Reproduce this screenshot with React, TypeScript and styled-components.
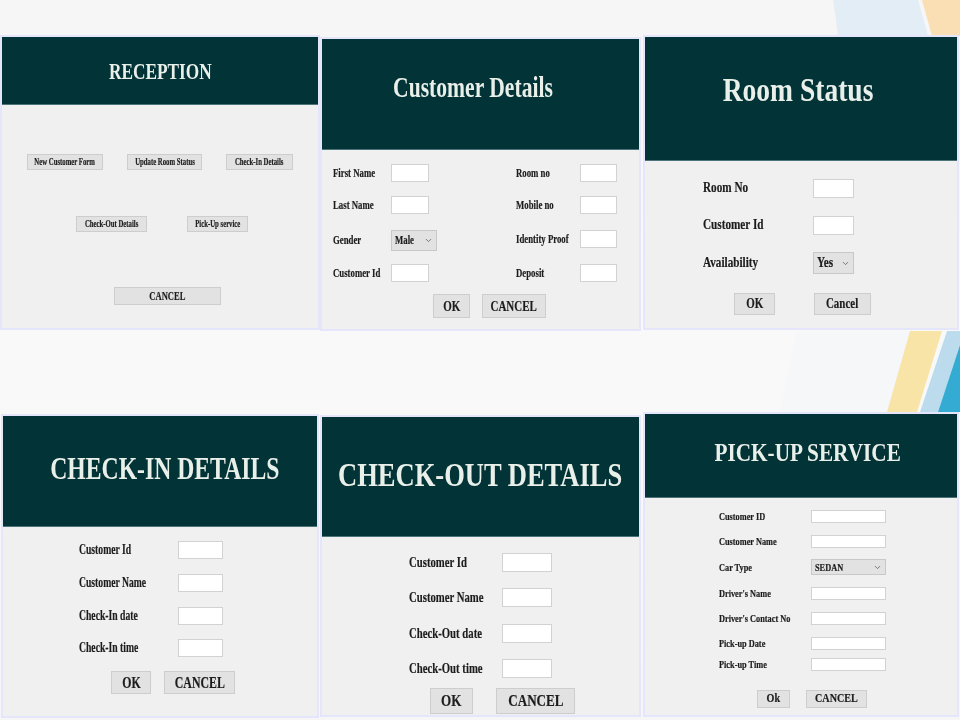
import styled, { createGlobalStyle } from "styled-components";
import { ChevronDown } from "lucide-react";

interface FieldData {
  label: string;
  center: number;
  select?: string;
}

interface FormData {
  width?: number;
  left: number;
  labelWidth: number;
  inputWidth: number;
  selectWidth?: number;
  height: number;
  font: number;
  squeeze: number;
  fields: FieldData[];
}

interface ButtonData {
  text: string;
  width: number;
}

const GlobalStyle = createGlobalStyle`
  html, body {
    margin: 0;
    padding: 0;
    background: #f7f7f7;
  }
`;

const Canvas = styled.div`
  position: relative;
  width: 960px;
  height: 720px;
  overflow: hidden;
  background: linear-gradient(180deg, #f6f6f6 0%, #f9f9f9 50%, #f6f6f6 100%);
  font-family: "Liberation Serif", "Times New Roman", serif;
  filter: blur(0.45px);
`;

const Backdrop = styled.svg`
  position: absolute;
  inset: 0;
`;

const Row = styled.div`
  position: relative;
  display: flex;
  align-items: flex-start;
  height: ${(p: { $h: number }) => p.$h}px;
`;

const Panel = styled.section<{ $w: number; $h: number; $ml: number; $mt: number }>`
  box-sizing: border-box;
  flex: none;
  width: ${(p) => p.$w}px;
  height: ${(p) => p.$h}px;
  margin: ${(p) => p.$mt}px 0 0 ${(p) => p.$ml}px;
  border: 2px solid #e5e5fb;
  background: #f0f0f0;
`;

const Header = styled.header<{ $h: number; $pad: string }>`
  box-sizing: border-box;
  display: flex;
  align-items: center;
  justify-content: center;
  height: ${(p) => p.$h}px;
  padding: ${(p) => p.$pad};
  background: #023337;
  border-bottom: 1px solid #4c7478;
`;

const Title = styled.h1<{ $size: number; $squeeze: number }>`
  margin: 0;
  color: #e9efe9;
  font-size: ${(p) => p.$size}px;
  font-weight: 700;
  line-height: 1;
  white-space: nowrap;
  transform: scaleX(${(p) => p.$squeeze});
`;

const Columns = styled.div`
  display: flex;
`;

const Form = styled.div<{ $w?: number; $pl: number; $pt: number }>`
  box-sizing: border-box;
  width: ${(p) => (p.$w ? `${p.$w}px` : "auto")};
  padding: ${(p) => p.$pt}px 0 0 ${(p) => p.$pl}px;
`;

const Field = styled.div<{ $h: number; $mt: number }>`
  display: flex;
  align-items: center;
  height: ${(p) => p.$h}px;
  margin-top: ${(p) => p.$mt}px;
`;

const Label = styled.label<{ $w: number; $font: number; $squeeze: number }>`
  flex: none;
  width: ${(p) => p.$w}px;
  color: #1c1c1c;
  font-size: ${(p) => p.$font}px;
  font-weight: 700;
  white-space: nowrap;
  -webkit-text-stroke: 0.2px #1c1c1c;
  transform: scaleX(${(p) => p.$squeeze});
  transform-origin: left center;
`;

const TextInput = styled.input<{ $w: number; $h: number }>`
  box-sizing: border-box;
  flex: none;
  width: ${(p) => p.$w}px;
  height: ${(p) => p.$h}px;
  padding: 0;
  border: 1px solid #d2d2d2;
  background: #fff;
`;

const SelectBox = styled.div<{ $w: number; $h: number; $font: number }>`
  box-sizing: border-box;
  flex: none;
  display: flex;
  align-items: center;
  justify-content: space-between;
  width: ${(p) => p.$w}px;
  height: ${(p) => p.$h}px;
  padding: 0 3px;
  border: 1px solid #c8c8c8;
  background: #e2e2e2;
  color: #1c1c1c;
  font-size: ${(p) => p.$font}px;
  font-weight: 700;
`;

const SelectText = styled.span<{ $squeeze: number }>`
  -webkit-text-stroke: 0.2px #1c1c1c;
  transform: scaleX(${(p) => p.$squeeze});
  transform-origin: left center;
`;

const ButtonRow = styled.div<{ $pl: number; $mt: number; $gap: number }>`
  display: flex;
  gap: ${(p) => p.$gap}px;
  margin-top: ${(p) => p.$mt}px;
  padding-left: ${(p) => p.$pl}px;
`;

const Button = styled.button<{ $w: number; $h: number; $font: number }>`
  box-sizing: border-box;
  display: flex;
  align-items: center;
  justify-content: center;
  flex: none;
  width: ${(p) => p.$w}px;
  height: ${(p) => p.$h}px;
  padding: 0;
  border: 1px solid #cdcdcd;
  background: #e2e2e2;
  color: #1c1c1c;
  font-family: inherit;
  font-size: ${(p) => p.$font}px;
  font-weight: 700;
`;

const ButtonText = styled.span<{ $squeeze: number }>`
  white-space: nowrap;
  -webkit-text-stroke: 0.2px #1c1c1c;
  transform: scaleX(${(p) => p.$squeeze});
`;

const Fields = ({ form, bodyTop }: { form: FormData; bodyTop: number }) => {
  const { fields, height, font, squeeze } = form;
  return (
    <Form
      $w={form.width}
      $pl={form.left}
      $pt={fields[0].center - height / 2 - bodyTop}
    >
      {fields.map((f, i) => (
        <Field
          key={f.label}
          $h={height}
          $mt={i ? f.center - fields[i - 1].center - height : 0}
        >
          <Label $w={form.labelWidth} $font={font} $squeeze={squeeze}>
            {f.label}
          </Label>
          {f.select ? (
            <SelectBox
              $w={form.selectWidth ?? form.inputWidth}
              $h={height + 3}
              $font={font}
            >
              <SelectText $squeeze={squeeze}>{f.select}</SelectText>
              <ChevronDown size={9} color="#555" strokeWidth={2} />
            </SelectBox>
          ) : (
            <TextInput $w={form.inputWidth} $h={height} />
          )}
        </Field>
      ))}
    </Form>
  );
};

const Buttons = ({
  items,
  pl,
  mt,
  gap,
  h,
  font,
  squeeze,
}: {
  items: ButtonData[];
  pl: number;
  mt: number;
  gap: number;
  h: number;
  font: number;
  squeeze: number;
}) => (
  <ButtonRow $pl={pl} $mt={mt} $gap={gap}>
    {items.map((b) => (
      <Button key={b.text} $w={b.width} $h={h} $font={font}>
        <ButtonText $squeeze={squeeze}>{b.text}</ButtonText>
      </Button>
    ))}
  </ButtonRow>
);

const customerLeft: FormData = {
  width: 194,
  left: 11,
  labelWidth: 58,
  inputWidth: 38,
  selectWidth: 46,
  height: 18,
  font: 12,
  squeeze: 0.73,
  fields: [
    { label: "First Name", center: 173 },
    { label: "Last Name", center: 205 },
    { label: "Gender", center: 240, select: "Male" },
    { label: "Customer Id", center: 273 },
  ],
};

const customerRight: FormData = {
  left: 0,
  labelWidth: 64,
  inputWidth: 37,
  height: 18,
  font: 12,
  squeeze: 0.73,
  fields: [
    { label: "Room no", center: 173 },
    { label: "Mobile no", center: 205 },
    { label: "Identity Proof", center: 239 },
    { label: "Deposit", center: 273 },
  ],
};

const roomForm: FormData = {
  left: 58,
  labelWidth: 110,
  inputWidth: 41,
  height: 19,
  font: 14,
  squeeze: 0.8,
  fields: [
    { label: "Room No", center: 188 },
    { label: "Customer Id", center: 225 },
    { label: "Availability", center: 263, select: "Yes" },
  ],
};

const checkInForm: FormData = {
  left: 76,
  labelWidth: 99,
  inputWidth: 45,
  height: 18,
  font: 14,
  squeeze: 0.69,
  fields: [
    { label: "Customer Id", center: 550 },
    { label: "Customer Name", center: 583 },
    { label: "Check-In date", center: 616 },
    { label: "Check-In time", center: 648 },
  ],
};

const checkOutForm: FormData = {
  left: 87,
  labelWidth: 93,
  inputWidth: 50,
  height: 19,
  font: 15,
  squeeze: 0.715,
  fields: [
    { label: "Customer Id", center: 562 },
    { label: "Customer Name", center: 597 },
    { label: "Check-Out date", center: 633 },
    { label: "Check-Out time", center: 668 },
  ],
};

const pickUpForm: FormData = {
  left: 74,
  labelWidth: 92,
  inputWidth: 75,
  height: 13,
  font: 10.5,
  squeeze: 0.79,
  fields: [
    { label: "Customer ID", center: 516 },
    { label: "Customer Name", center: 541 },
    { label: "Car Type", center: 567, select: "SEDAN" },
    { label: "Driver's Name", center: 593 },
    { label: "Driver's Contact No", center: 618 },
    { label: "Pick-up Date", center: 643 },
    { label: "Pick-up Time", center: 664 },
  ],
};

const App = () => {
  return (
    <>
      <GlobalStyle />
      <Canvas>
        <Backdrop width="960" height="720" viewBox="0 0 960 720">
          <path d="M833 0 Q836 18 838 36 L928 36 L918 0 Z" fill="#e2edf5" />
          <path d="M922 0 L932 36 L960 36 L960 0 Z" fill="#fadfb4" />
          <path d="M797 331 L780 412 L890 412 L910 331 Z" fill="#f5f7f9" />
          <path d="M910 331 L942 331 L917 412 L887 412 Z" fill="#f9e4a8" />
          <path d="M947 331 L960 331 L960 345 L938 412 L920 412 Z" fill="#bcdcee" />
          <path d="M960 345 L960 412 L938 412 Z" fill="#34abd3" />
        </Backdrop>

        <Row $h={332}>
          <Panel $w={320} $h={295} $ml={0} $mt={35}>
            <Header $h={68} $pad="0">
              <Title $size={24} $squeeze={0.72}>RECEPTION</Title>
            </Header>
            <Buttons
              pl={25}
              mt={49}
              gap={24}
              h={16}
              font={9.5}
              squeeze={0.71}
              items={[
                { text: "New Customer Form", width: 76 },
                { text: "Update Room Status", width: 75 },
                { text: "Check-In Details", width: 67 },
              ]}
            />
            <Buttons
              pl={74}
              mt={46}
              gap={40}
              h={16}
              font={9.5}
              squeeze={0.71}
              items={[
                { text: "Check-Out Details", width: 71 },
                { text: "Pick-Up service", width: 61 },
              ]}
            />
            <Buttons
              pl={112}
              mt={55}
              gap={0}
              h={18}
              font={12}
              squeeze={0.71}
              items={[{ text: "CANCEL", width: 107 }]}
            />
          </Panel>

          <Panel $w={321} $h={294} $ml={0} $mt={37}>
            <Header $h={111} $pad="0 15px 15px 0">
              <Title $size={30} $squeeze={0.72}>Customer Details</Title>
            </Header>
            <Columns>
              <Fields form={customerLeft} bodyTop={150} />
              <Fields form={customerRight} bodyTop={150} />
            </Columns>
            <Buttons
              pl={111}
              mt={12}
              gap={12}
              h={24}
              font={15}
              squeeze={0.73}
              items={[
                { text: "OK", width: 37 },
                { text: "CANCEL", width: 64 },
              ]}
            />
          </Panel>

          <Panel $w={316} $h={295} $ml={2} $mt={35}>
            <Header $h={124} $pad="0 6px 18px 0">
              <Title $size={34} $squeeze={0.81}>Room Status</Title>
            </Header>
            <Fields form={roomForm} bodyTop={161} />
            <Buttons
              pl={89}
              mt={20}
              gap={39}
              h={22}
              font={15}
              squeeze={0.73}
              items={[
                { text: "OK", width: 41 },
                { text: "Cancel", width: 57 },
              ]}
            />
          </Panel>
        </Row>

        <Row $h={388}>
          <Panel $w={318} $h={304} $ml={1} $mt={82}>
            <Header $h={111} $pad="0 0 7px 10px">
              <Title $size={32} $squeeze={0.74}>CHECK-IN DETAILS</Title>
            </Header>
            <Fields form={checkInForm} bodyTop={527} />
            <Buttons
              pl={108}
              mt={14}
              gap={13}
              h={23}
              font={16}
              squeeze={0.74}
              items={[
                { text: "OK", width: 40 },
                { text: "CANCEL", width: 71 },
              ]}
            />
          </Panel>

          <Panel $w={321} $h={302} $ml={1} $mt={83}>
            <Header $h={120} $pad="0 0 4px 0">
              <Title $size={34} $squeeze={0.78}>CHECK-OUT DETAILS</Title>
            </Header>
            <Fields form={checkOutForm} bodyTop={537} />
            <Buttons
              pl={108}
              mt={10}
              gap={23}
              h={26}
              font={17}
              squeeze={0.77}
              items={[
                { text: "OK", width: 43 },
                { text: "CANCEL", width: 79 },
              ]}
            />
          </Panel>

          <Panel $w={316} $h={305} $ml={2} $mt={80}>
            <Header $h={84} $pad="0 0 6px 14px">
              <Title $size={25} $squeeze={0.85}>PICK-UP SERVICE</Title>
            </Header>
            <Fields form={pickUpForm} bodyTop={498} />
            <Buttons
              pl={112}
              mt={19}
              gap={16}
              h={18}
              font={12.5}
              squeeze={0.81}
              items={[
                { text: "Ok", width: 33 },
                { text: "CANCEL", width: 61 },
              ]}
            />
          </Panel>
        </Row>
      </Canvas>
    </>
  );
};

export default App;
